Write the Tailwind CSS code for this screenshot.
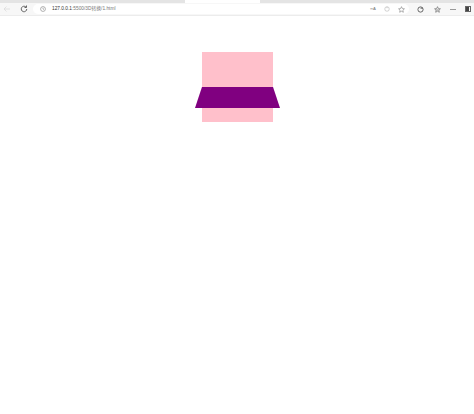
<!DOCTYPE html>
<html lang="en">
<head>
<meta charset="UTF-8" />
<title>1.html</title>
<script src="https://cdn.jsdelivr.net/npm/@tailwindcss/browser@4"></script>
</head>
<body class="bg-white font-['Liberation_Sans','Noto_Sans_CJK_SC',sans-serif] h-[414px] overflow-hidden">

  <!-- tab strip -->
  <div class="h-[3px] bg-[#e4e4e4] flex pl-[185px]">
    <div class="w-[75px] bg-white"></div>
  </div>

  <!-- toolbar -->
  <div class="h-[13px] bg-[#f7f7f7] border-b border-[#ececec] flex items-center pl-[3px] pr-[3px]">
    <svg class="w-[8px] h-[8px]" viewBox="0 0 16 16" fill="none" stroke="#dcdcdc" stroke-width="1.6"><path d="M14 8H2M7 3 2 8l5 5"/></svg>
    <svg class="w-[8px] h-[8px] ml-[9px]" viewBox="0 0 16 16" fill="none" stroke="#555" stroke-width="1.8"><path d="M13.5 8a5.5 5.5 0 1 1-1.700-4"/><path d="M13 1v4H9"/></svg>

    <!-- address bar -->
    <div class="ml-[5px] w-[376px] h-[10px] bg-white rounded-full flex items-center pl-[7px] pr-[4.5px]">
      <svg class="w-[6px] h-[6px]" viewBox="0 0 16 16" fill="none" stroke="#777" stroke-width="1.5"><circle cx="8" cy="8" r="6.5"/><path d="M8 4.500V8l2.500 1.500"/></svg>
      <span class="ml-[6px] text-[4.800px] leading-none text-[#333] whitespace-nowrap">127.0.0.1<span class="text-[#777]">:5500/3D转换/1.html</span></span>
      <div class="ml-auto flex items-center">
        <span class="text-[4px] leading-none text-[#888] font-bold">∞A</span>
        <svg class="w-[6px] h-[6px] ml-[8px]" viewBox="0 0 16 16" fill="none" stroke="#aaa" stroke-width="1.400"><circle cx="8" cy="8" r="6"/><path d="M8 2v4"/></svg>
        <svg class="w-[7px] h-[7px] ml-[7.500px]" viewBox="0 0 16 16" fill="none" stroke="#777" stroke-width="1.300"><path d="m8 1.500 2 4.400 4.700.5-3.500 3.200 1 4.700L8 11.900l-4.200 2.400 1-4.700-3.500-3.200L6 5.900z"/></svg>
      </div>
    </div>

    <div class="ml-auto flex items-center">
      <svg class="w-[7px] h-[7px]" viewBox="0 0 16 16" fill="none" stroke="#555" stroke-width="2"><circle cx="8" cy="8" r="6"/><path d="M8 5h5"/></svg>
      <svg class="w-[7px] h-[7px] ml-[10px]" viewBox="0 0 16 16" fill="none" stroke="#666" stroke-width="1.500"><path d="m8 1.500 2 4.400 4.700.5-3.500 3.200 1 4.700L8 11.900l-4.200 2.400 1-4.700-3.500-3.200L6 5.900z"/><path d="M5 9h6"/></svg>
      <div class="w-[6px] h-[1px] ml-[9.500px] bg-[#999]"></div>
      <div class="w-[6px] h-[6px] ml-[9px] flex border border-[#666]"><div class="w-[2.500px] bg-[#444]"></div></div>
    </div>
  </div>

  <!-- page content -->
  <div class="relative w-[70.500px] h-[70px] ml-[202px] mt-[36px] bg-[#ffc0cb]">
    <div class="absolute left-[-7px] top-[35px] w-[85px] h-[21px] bg-[#800080] [clip-path:polygon(8.200%_0,91.800%_0,100%_100%,0_100%)]"></div>
  </div>

</body>
</html>
